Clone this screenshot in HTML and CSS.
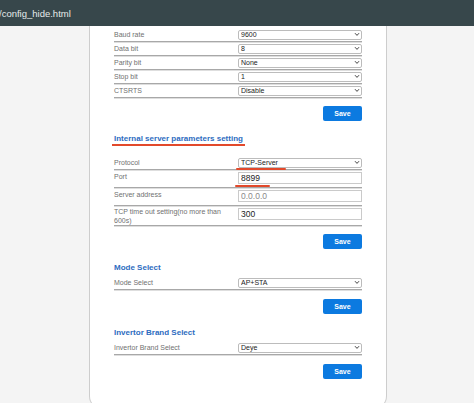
FILE: index.html
```html
<!DOCTYPE html>
<html lang="en">
<head>
    <meta charset="UTF-8">
    <meta name="viewport" content="width=device-width, initial-scale=1.0">
    <title>config_hide</title>
    <link rel="stylesheet" href="styles.css">
</head>
<body>
    <div class="topbar">/config_hide.html</div>

    <div class="card">
        <!-- serial port -->
        <div class="row first">
            <span class="label">Baud rate</span>
            <div class="pick"><select><option>9600</option></select><svg class="chev" viewBox="0 0 6 5"><path d="M1 1.2 L3 3.4 L5 1.2"/></svg></div>
        </div>
        <div class="row">
            <span class="label">Data bit</span>
            <div class="pick"><select><option>8</option></select><svg class="chev" viewBox="0 0 6 5"><path d="M1 1.2 L3 3.4 L5 1.2"/></svg></div>
        </div>
        <div class="row">
            <span class="label">Parity bit</span>
            <div class="pick"><select><option>None</option></select><svg class="chev" viewBox="0 0 6 5"><path d="M1 1.2 L3 3.4 L5 1.2"/></svg></div>
        </div>
        <div class="row">
            <span class="label">Stop bit</span>
            <div class="pick"><select><option>1</option></select><svg class="chev" viewBox="0 0 6 5"><path d="M1 1.2 L3 3.4 L5 1.2"/></svg></div>
        </div>
        <div class="row">
            <span class="label">CTSRTS</span>
            <div class="pick"><select><option>Disable</option></select><svg class="chev" viewBox="0 0 6 5"><path d="M1 1.2 L3 3.4 L5 1.2"/></svg></div>
        </div>
        <div class="actions"><button class="save">Save</button></div>

        <!-- internal server -->
        <h2 class="section spaced"><span class="mark">Internal server parameters setting</span></h2>
        <div class="row">
            <span class="label">Protocol</span>
            <div class="pick"><select><option>TCP-Server</option></select><svg class="chev" viewBox="0 0 6 5"><path d="M1 1.2 L3 3.4 L5 1.2"/></svg><span class="scribble proto"></span></div>
        </div>
        <div class="row irow">
            <span class="label">Port</span>
            <div class="pick"><input class="field" type="text" value="8899"><span class="scribble port"></span></div>
        </div>
        <div class="row irow">
            <span class="label">Server address</span>
            <div class="pick"><input class="field muted" type="text" value="0.0.0.0" readonly></div>
        </div>
        <div class="row irow tall">
            <span class="label">TCP time out setting(no more than 600s)</span>
            <div class="pick"><input class="field" type="text" value="300"></div>
        </div>
        <div class="actions"><button class="save">Save</button></div>

        <!-- mode -->
        <h2 class="section">Mode Select</h2>
        <div class="row">
            <span class="label">Mode Select</span>
            <div class="pick"><select><option>AP+STA</option></select><svg class="chev" viewBox="0 0 6 5"><path d="M1 1.2 L3 3.4 L5 1.2"/></svg></div>
        </div>
        <div class="actions wide"><button class="save">Save</button></div>

        <!-- brand -->
        <h2 class="section">Invertor Brand Select</h2>
        <div class="row">
            <span class="label">Invertor Brand Select</span>
            <div class="pick"><select><option>Deye</option></select><svg class="chev" viewBox="0 0 6 5"><path d="M1 1.2 L3 3.4 L5 1.2"/></svg></div>
        </div>
        <div class="actions wide"><button class="save">Save</button></div>
    </div>
</body>
</html>
```
FILE: styles.css
```css
body {
    margin: 0;
    background: #f4f4f4;
    font-family: "Liberation Sans", Arial, sans-serif;
}
.topbar {
    height: 26px;
    line-height: 27px;
    background: #37474b;
    color: #e6eaea;
    font-size: 9.5px;
    margin-left: -1px;
}
.card {
    margin-left: 89px;
    width: 248px;
    background: #fff;
    border: 1px solid #cdcdcd;
    border-top: none;
    border-radius: 0 0 14px 14px;
    padding: 2px 24px 30px 24px;
}
.row {
    display: grid;
    grid-template-columns: 124px 1fr;
    padding: 2px 0 1px;
    border-bottom: 1px solid #a8a8a8;
    box-shadow: 0 1px 0 #dedede;
}
.label {
    font-size: 7px;
    line-height: 9px;
    color: #707070;
}
.pick {
    position: relative;
}
.pick select {
    appearance: none;
    -webkit-appearance: none;
    display: block;
    box-sizing: border-box;
    width: 100%;
    height: 10px;
    margin: 0;
    padding: 0 0 0 2px;
    border: 1px solid #bcbcbc;
    border-radius: 2px;
    background: #fff;
    color: #222;
    font: 7px "Liberation Sans", Arial, sans-serif;
    line-height: 8px;
}
.chev {
    position: absolute;
    right: 2px;
    top: 2px;
    width: 6px;
    height: 5px;
    fill: none;
    stroke: #444;
    stroke-width: 1;
    pointer-events: none;
}
.irow {
    padding: 2px 0 3px;
}
.tall {
    padding-bottom: 0;
}
.tall .label {
    line-height: 8.5px;
    padding-right: 8px;
}
.field {
    display: block;
    box-sizing: border-box;
    width: 100%;
    height: 12px;
    margin: 0;
    padding: 0 2px;
    border: 1px solid #cacaca;
    background: #fff;
    color: #222;
    font: 8.5px "Liberation Sans", Arial, sans-serif;
}
.field.muted {
    color: #8a8a8a;
}
.scribble {
    position: absolute;
    height: 2px;
    border-radius: 1px;
    background: #e2492b;
}
.scribble.proto {
    left: -2px;
    top: 10px;
    width: 50px;
}
.scribble.port {
    left: -3px;
    top: 13px;
    width: 35px;
}
.actions {
    display: flex;
    justify-content: flex-end;
    margin-top: 8px;
}
.actions.wide {
    margin-top: 9px;
}
.save {
    width: 39px;
    height: 15px;
    padding: 0;
    border: none;
    border-radius: 2px;
    background: #0c7ae0;
    color: #fff;
    font: bold 7px "Liberation Sans", Arial, sans-serif;
    cursor: pointer;
}
.section {
    margin: 14px 0 3px;
    font-size: 8px;
    line-height: 10px;
    font-weight: bold;
    color: #2d6cc0;
}
.section.spaced {
    margin-top: 13px;
    margin-bottom: 10px;
}
.mark {
    display: inline-block;
    margin-left: -2px;
    padding: 0 2px;
    border-bottom: 2px solid #e2492b;
}
```
